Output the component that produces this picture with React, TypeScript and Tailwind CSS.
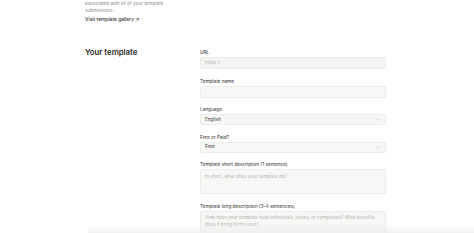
import { ChevronDown } from "lucide-react";

const font = { fontFamily: "Inter, 'Liberation Sans', sans-serif" };

function Label({ children }: { children: React.ReactNode }) {
  return <div className="text-[4.7px] leading-[6px] text-[#2f2e2b] mb-[2px]">{children}</div>;
}

function Select({ value }: { value: string }) {
  return (
    <div className="h-[11px] rounded-[2px] border border-[#ececea] bg-[#f7f7f5] flex items-center justify-between px-[4px]">
      <span className="text-[4.7px] text-[#37352f]">{value}</span>
      <ChevronDown className="w-[5px] h-[5px] text-[#9b9a97]" strokeWidth={2} />
    </div>
  );
}

export default function App() {
  return (
    <div className="relative w-[474px] h-[233px] overflow-hidden bg-white" style={font}>
      <div className="pl-[85px] w-[200px]">
        <p className="text-[4.7px] leading-[7px] text-[#8c8b88]">
          associated with all of your template
          <br />
          submissions.
        </p>
        <a className="block mt-[2px] text-[4.9px] leading-[7px] font-medium text-[#37352f]">
          Visit template gallery ↗
        </a>
      </div>

      <div className="grid grid-cols-[115px_186px] pl-[85px] mt-[24px]">
        <h2 className="text-[7.8px] leading-[10px] font-semibold text-[#1f1f1d]">Your template</h2>

        <div className="flex flex-col gap-[8.5px] pt-[2px]">
          <div>
            <Label>URL</Label>
            <div className="h-[12px] rounded-[2px] border border-[#ececea] bg-[#f5f5f3] flex items-center px-[4px]">
              <span className="text-[4.7px] text-[#b5b4b0]">https://</span>
            </div>
          </div>
          <div>
            <Label>Template name</Label>
            <div className="h-[12px] rounded-[2px] border border-[#ececea] bg-[#f7f7f5]" />
          </div>
          <div>
            <Label>Language</Label>
            <Select value="English" />
          </div>
          <div>
            <Label>Free or Paid?</Label>
            <Select value="Free" />
          </div>
          <div>
            <Label>Template short description (1 sentence)</Label>
            <div className="h-[25px] rounded-[2px] border border-[#ececea] bg-[#f7f7f5] px-[4px] pt-[3px]">
              <p className="text-[4.6px] leading-[7px] text-[#b5b4b0]">In short, what does your template do?</p>
            </div>
          </div>
          <div>
            <Label>Template long description (3–4 sentences)</Label>
            <div className="h-[40px] rounded-[2px] border border-[#ececea] bg-[#f7f7f5] pl-[4px] pr-[2px] pt-[2px]">
              <p className="text-[4.6px] leading-[7px] text-[#b5b4b0]">
                How does your template help individuals, teams, or companies? What benefits
                <br />
                does it bring to the user?
              </p>
            </div>
          </div>
        </div>
      </div>

      <div className="absolute bottom-0 left-[88px] right-0 h-[10px] bg-gradient-to-b from-white/0 to-[#ebebeb]/70" />
    </div>
  );
}
